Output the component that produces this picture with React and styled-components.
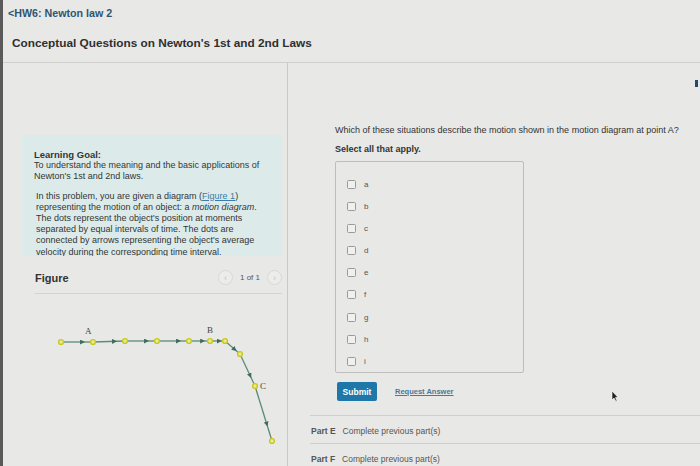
import React from "react";
import styled, { createGlobalStyle } from "styled-components";

const GlobalStyle = createGlobalStyle`
  html, body {
    margin: 0;
    padding: 0;
    background: #e6e6e4;
  }
  body {
    font-family: "Liberation Sans", Arial, sans-serif;
    color: #333;
  }
`;

const Page = styled.div`
  width: 700px;
  height: 466px;
  overflow: hidden;
  border-left: 3px solid #5a5a5a;
  box-sizing: border-box;
  background: #e8e8e6;
  position: relative;
`;

const Header = styled.div`
  height: 63px;
  border-bottom: 1px solid #cfcfcd;
  padding: 7px 0 0 5px;
  box-sizing: border-box;
`;

const BackLink = styled.div`
  font-size: 10.7px;
  font-weight: bold;
  color: #2d5673;
  line-height: 13px;
`;

const Title = styled.h1`
  margin: 16px 0 0 4px;
  font-size: 11.8px;
  font-weight: bold;
  color: #2f2f2f;
  line-height: 15px;
`;

const Main = styled.div`
  display: grid;
  grid-template-columns: 285px 1fr;
  height: 402px;
`;

const LeftPanel = styled.div`
  border-right: 1px solid #c9c9c7;
  padding: 72px 5px 0 19px;
`;

const GoalBox = styled.div`
  background: #dcebea;
  height: 121px;
  overflow: hidden;
  padding: 14px 14px 0 12px;
  box-sizing: border-box;
  font-size: 9px;
  line-height: 11.2px;
  color: #353535;
`;

const GoalHead = styled.div`
  font-weight: bold;
  font-size: 9.5px;
`;

const Para = styled.p`
  margin: ${(p) => (p.$gap ? "8px 0 0 2px" : "0")};
`;

const FigLink = styled.span`
  color: #3a7ca8;
  text-decoration: underline;
`;

const FigureBar = styled.div`
  display: flex;
  align-items: center;
  justify-content: space-between;
  margin: 14px 0 0 13px;
  padding-bottom: 8px;
  border-bottom: 1px solid #d3d3d1;
`;

const FigureTitle = styled.div`
  font-size: 11px;
  font-weight: bold;
  color: #333;
`;

const Pager = styled.div`
  display: flex;
  align-items: center;
  gap: 7px;
  font-size: 8px;
  color: #555;
`;

const PageBtn = styled.div`
  width: 13px;
  height: 13px;
  border-radius: 50%;
  border: 1px solid #d8d8d6;
  background: #ececea;
  color: #c3c3c1;
  font-size: 9px;
  display: flex;
  align-items: center;
  justify-content: center;
`;

const Diagram = styled.svg`
  display: block;
  margin: 0 0 0 -19px;
`;

const RightPanel = styled.div`
  padding: 62px 0 0 47px;
  display: flex;
  flex-direction: column;
`;

const Question = styled.div`
  font-size: 9px;
  color: #333;
  line-height: 11px;
  white-space: nowrap;
`;

const Instruction = styled.div`
  font-size: 9px;
  font-weight: bold;
  color: #333;
  margin-top: 8px;
`;

const OptionBox = styled.div`
  width: 189px;
  height: 212px;
  box-sizing: border-box;
  border: 1px solid #bdbdbb;
  border-radius: 2px;
  margin-top: 7px;
  padding: 17px 0 0 11px;
  display: flex;
  flex-direction: column;
  gap: 12.2px;
`;

const Option = styled.label`
  display: flex;
  align-items: center;
  gap: 8px;
  font-size: 8px;
  color: #555;
  height: 10px;
`;

const Box = styled.span`
  width: 7px;
  height: 7px;
  border: 1px solid #9a9a98;
  border-radius: 1.5px;
  background: #f0f0ee;
`;

const Actions = styled.div`
  display: flex;
  align-items: center;
  gap: 18px;
  margin: 9px 0 0 2px;
`;

const SubmitButton = styled.button`
  width: 40px;
  height: 19px;
  border: none;
  border-radius: 2px;
  background: #1e77a6;
  color: #fff;
  font-family: inherit;
  font-size: 8.5px;
  font-weight: bold;
  padding: 0;
`;

const RequestLink = styled.span`
  font-size: 7.5px;
  font-weight: bold;
  color: #4a7898;
  text-decoration: underline;
`;

const Parts = styled.div`
  margin: 14px 0 0 -25px;
`;

const PartRow = styled.div`
  border-top: 1px solid #cfcfcd;
  height: 28px;
  box-sizing: border-box;
  padding: 10px 0 0 1px;
  display: flex;
  align-items: flex-start;
  gap: 7px;
  font-size: 8.5px;
  line-height: 10px;
  color: #555;
`;

const PartLabel = styled.span`
  font-weight: bold;
  color: #555;
`;

const Marker = styled.div`
  position: absolute;
  right: 2px;
  top: 80px;
  width: 3px;
  height: 7px;
  background: #234a66;
`;

const Cursor = styled.svg`
  position: absolute;
  left: 608px;
  top: 391px;
`;

const dots = [
  [58, 48],
  [90, 48],
  [122, 47],
  [154, 47],
  [186, 47],
  [207, 47],
  [222, 47],
  [237, 60],
  [252, 92],
  [269, 147],
];

function MotionDiagram() {
  return (
    <Diagram width="287" height="160" viewBox="0 0 287 160">
      <defs>
        <marker id="arr" markerWidth="5" markerHeight="5" refX="4" refY="2.5" orient="auto">
          <path d="M0,0 L5,2.5 L0,5 z" fill="#3f6d5a" />
        </marker>
      </defs>
      {dots.slice(1).map((d, i) => {
        const [x0, y0] = dots[i];
        const [x1, y1] = d;
        const mx = x0 + (x1 - x0) * 0.72;
        const my = y0 + (y1 - y0) * 0.72;
        return (
          <g key={i}>
            <line x1={x0} y1={y0} x2={x1} y2={y1} stroke="#5b8c78" strokeWidth="1.3" />
            <line x1={x0} y1={y0} x2={mx} y2={my} stroke="transparent" markerEnd="url(#arr)" />
          </g>
        );
      })}
      {dots.map(([x, y], i) => (
        <circle key={i} cx={x} cy={y} r="2.4" fill="#eaea9a" stroke="#c8c81e" strokeWidth="1.4" />
      ))}
      <text x="82" y="40" fontSize="9" fontFamily="Liberation Serif, serif" fill="#444">A</text>
      <text x="204" y="39" fontSize="9" fontFamily="Liberation Serif, serif" fill="#444">B</text>
      <text x="257" y="95" fontSize="9" fontFamily="Liberation Serif, serif" fill="#444">C</text>
    </Diagram>
  );
}

const letters = ["a", "b", "c", "d", "e", "f", "g", "h", "i"];

export default function App() {
  return (
    <>
      <GlobalStyle />
      <Page>
        <Header>
          <BackLink>&lt;HW6: Newton law 2</BackLink>
          <Title>Conceptual Questions on Newton's 1st and 2nd Laws</Title>
        </Header>
        <Main>
          <LeftPanel>
            <GoalBox>
              <GoalHead>Learning Goal:</GoalHead>
              <Para>To understand the meaning and the basic applications of Newton's 1st and 2nd laws.</Para>
              <Para $gap>
                In this problem, you are given a diagram (<FigLink>Figure 1</FigLink>) representing the
                motion of an object: a <i>motion diagram</i>. The dots represent the object's position
                at moments separated by equal intervals of time. The dots are connected by arrows
                representing the object's average velocity during the corresponding time interval.
              </Para>
            </GoalBox>
            <FigureBar>
              <FigureTitle>Figure</FigureTitle>
              <Pager>
                <PageBtn>‹</PageBtn>
                <span>1 of 1</span>
                <PageBtn>›</PageBtn>
              </Pager>
            </FigureBar>
            <MotionDiagram />
          </LeftPanel>
          <RightPanel>
            <Question>
              Which of these situations describe the motion shown in the motion diagram at point A?
            </Question>
            <Instruction>Select all that apply.</Instruction>
            <OptionBox>
              {letters.map((l) => (
                <Option key={l}>
                  <Box />
                  {l}
                </Option>
              ))}
            </OptionBox>
            <Actions>
              <SubmitButton>Submit</SubmitButton>
              <RequestLink>Request Answer</RequestLink>
            </Actions>
            <Parts>
              <PartRow>
                <PartLabel>Part E</PartLabel>
                Complete previous part(s)
              </PartRow>
              <PartRow>
                <PartLabel>Part F</PartLabel>
                Complete previous part(s)
              </PartRow>
            </Parts>
          </RightPanel>
        </Main>
        <Marker />
        <Cursor width="8" height="11" viewBox="0 0 8 11">
          <path d="M1,0 L1,9 L3,7 L5,10.5 L6,10 L4.5,6.5 L7,6.5 z" fill="#222" stroke="#fff" strokeWidth="0.6" />
        </Cursor>
      </Page>
    </>
  );
}
